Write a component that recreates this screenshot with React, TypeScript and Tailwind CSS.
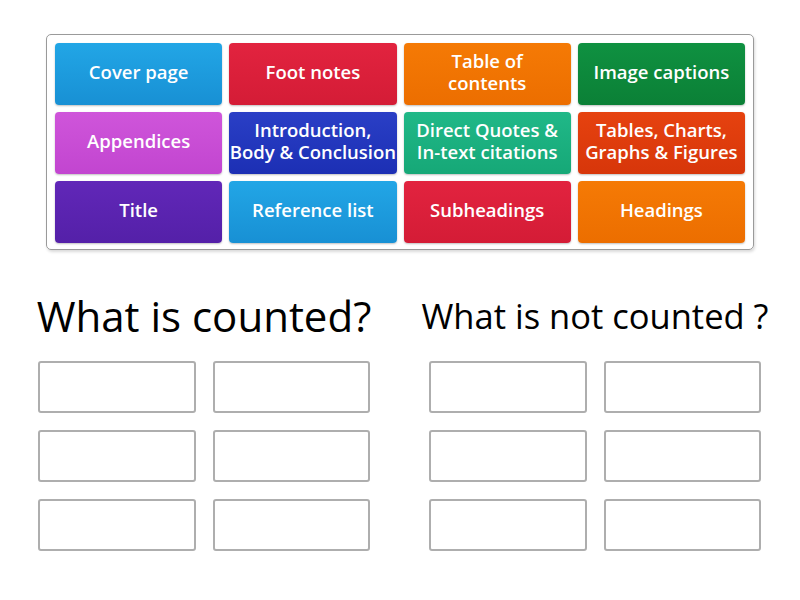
const tiles: { label: string; cls: string }[] = [
  { label: 'Cover page', cls: 'from-[#22a6e6] to-[#1890d4]' },
  { label: 'Foot notes', cls: 'from-[#e2233f] to-[#d41c36]' },
  { label: 'Table of\ncontents', cls: 'from-[#f57a05] to-[#ec6e00]' },
  { label: 'Image captions', cls: 'from-[#0f9141] to-[#0b8036]' },
  { label: 'Appendices', cls: 'from-[#cf55da] to-[#c245d0]' },
  { label: 'Introduction,\nBody & Conclusion', cls: 'from-[#2a3fc6] to-[#1c2fb4]' },
  { label: 'Direct Quotes &\nIn-text citations', cls: 'from-[#20b888] to-[#16a877]' },
  { label: 'Tables, Charts,\nGraphs & Figures', cls: 'from-[#e6420f] to-[#d7360a]' },
  { label: 'Title', cls: 'from-[#6127b8] to-[#5420a8]' },
  { label: 'Reference list', cls: 'from-[#22a6e6] to-[#1890d4]' },
  { label: 'Subheadings', cls: 'from-[#e2233f] to-[#d41c36]' },
  { label: 'Headings', cls: 'from-[#f57a05] to-[#ec6e00]' },
];

function DropGroup({ title, titleCls }: { title: string; titleCls: string }) {
  return (
    <div className="w-[332px] flex flex-col">
      <div className="h-[64px] flex items-center justify-center">
        <h2 className={`whitespace-nowrap text-black ${titleCls}`}>{title}</h2>
      </div>
      <div className="mt-[13px] grid grid-cols-2 gap-x-[17px] gap-y-[17px]">
        {Array.from({ length: 6 }).map((_, i) => (
          <div key={i} className="h-[52px] rounded-[3px] border-2 border-[#aeaeae] bg-white" />
        ))}
      </div>
    </div>
  );
}

export default function App() {
  return (
    <div className="w-[800px] h-[600px] bg-white font-['Open_Sans',sans-serif]">
      <div className="pt-[34px] pl-[46px]">
        <div className="w-[708px] rounded-[5px] border border-[#9a9a9a] shadow-[1px_2px_3px_rgba(0,0,0,0.15)] px-[8px] pt-[8px] pb-[6px] grid grid-cols-4 gap-x-[7px] gap-y-[7px]">
          {tiles.map((t) => (
            <div
              key={t.label}
              className={`h-[62px] pb-[4px] rounded-[4px] bg-gradient-to-b ${t.cls} shadow-[0_1px_2px_rgba(0,0,0,0.25)] flex items-center justify-center text-center text-white font-semibold text-[18.5px] leading-[22px] whitespace-pre`}
            >
              {t.label}
            </div>
          ))}
        </div>
      </div>
      <div className="mt-[34px] pl-[38px] flex gap-[59px]">
        <DropGroup title="What is counted?" titleCls="text-[42px] leading-none" />
        <DropGroup title="What is not counted ?" titleCls="text-[34.5px] leading-none" />
      </div>
    </div>
  );
}
